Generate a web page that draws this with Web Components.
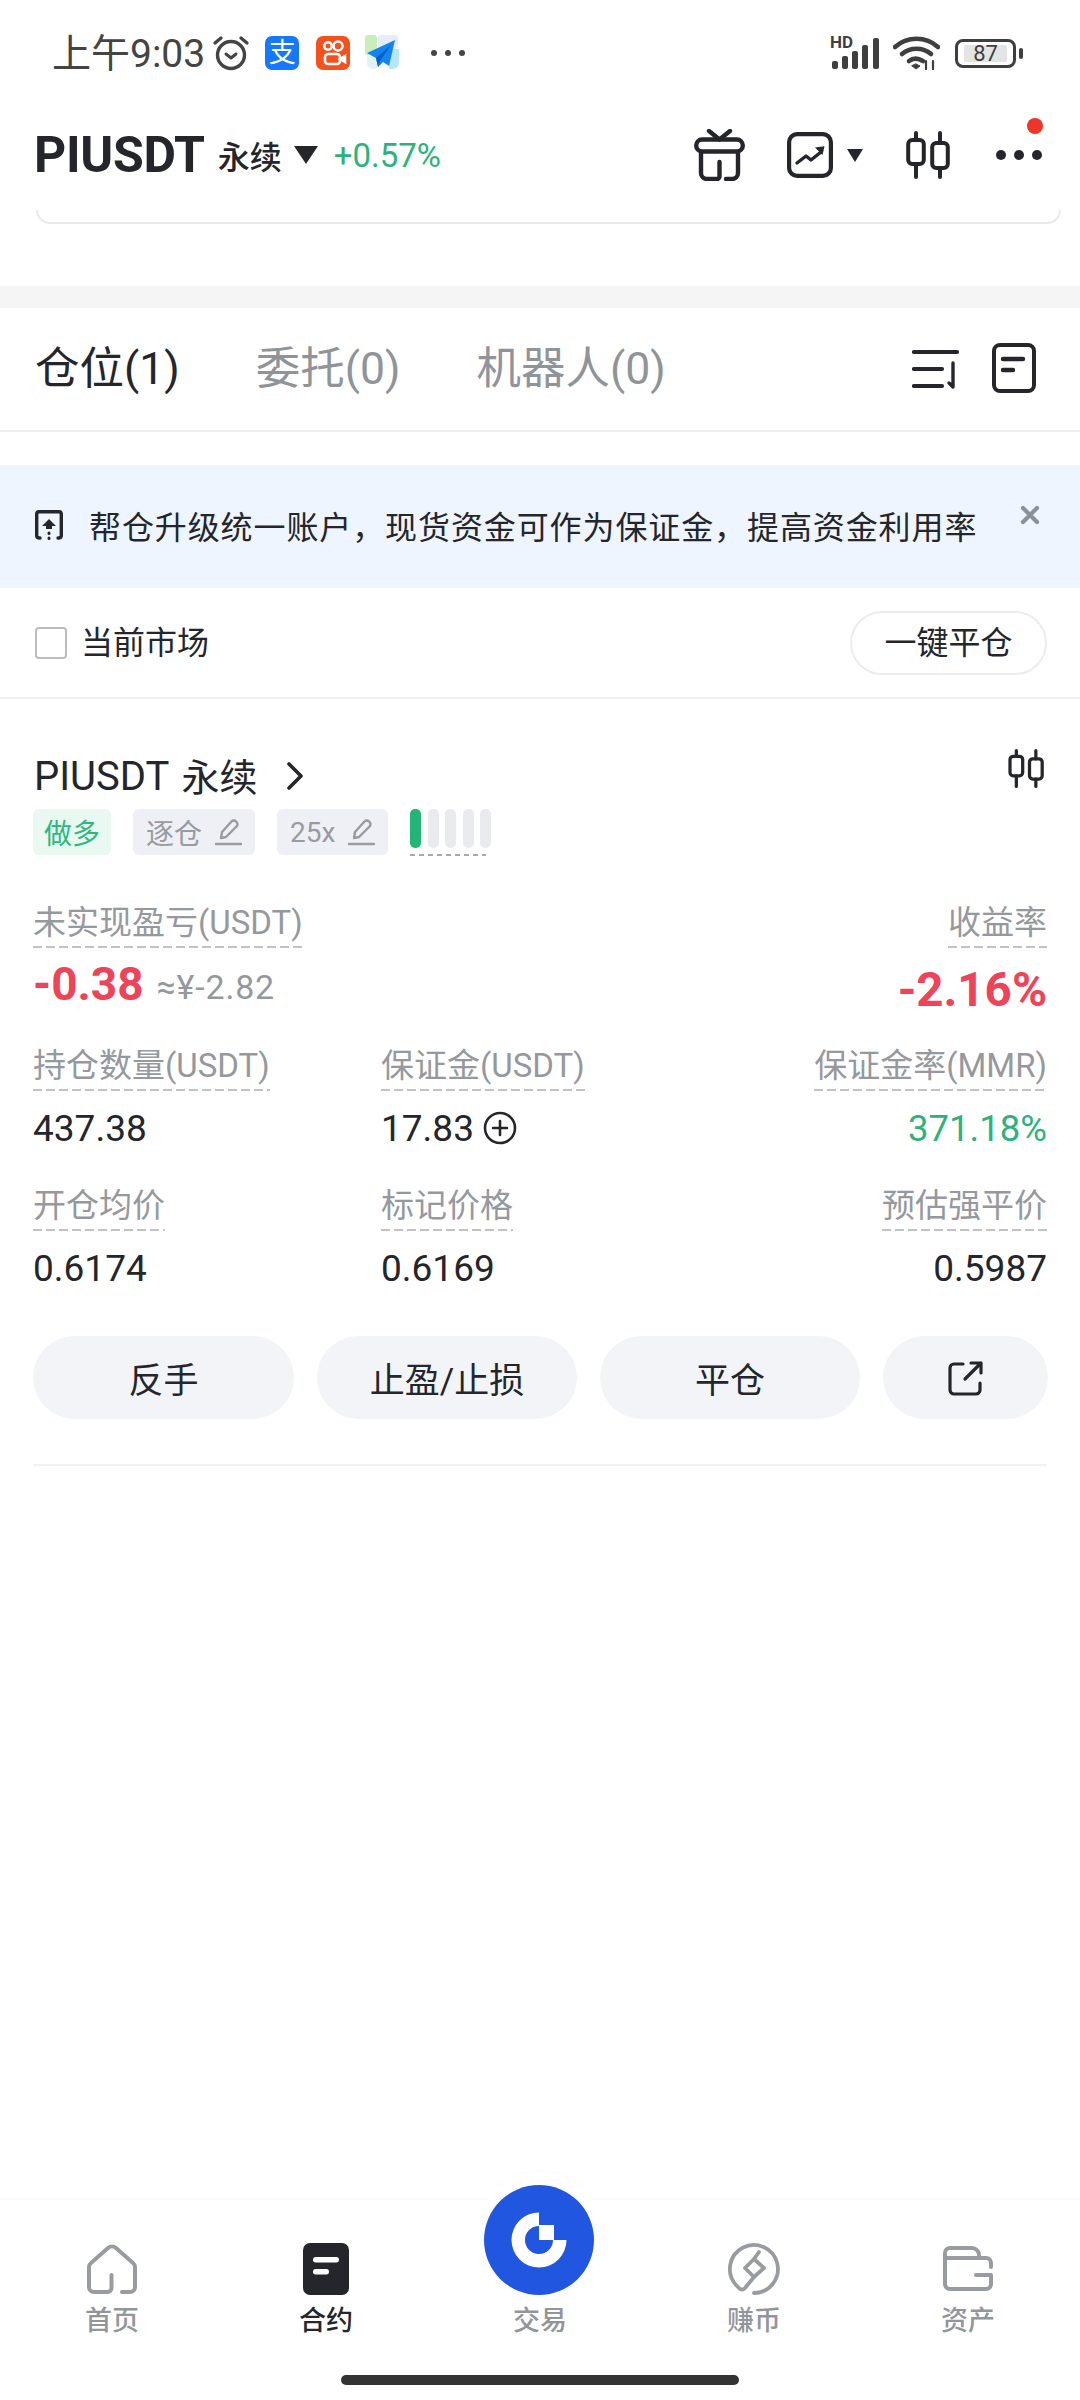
<!DOCTYPE html>
<html lang="zh-CN">
<head>
<meta charset="utf-8">
<title>PIUSDT</title>
<style>
  html, body { margin: 0; padding: 0; background: #fff; }
  body { font-family: Roboto, "Noto Sans CJK SC", sans-serif; color: #24262c; }
  app-page { width: 1080px; height: 2400px; }
</style>
</head>
<body>
<app-page>
  <status-bar></status-bar>
  <market-header></market-header>
  <tab-bar></tab-bar>
  <notice-banner>帮仓升级统一账户，现货资金可作为保证金，提高资金利用率</notice-banner>
  <filter-row></filter-row>
  <position-card></position-card>
  <bottom-nav slot="nav"></bottom-nav>
</app-page>

<script>
const INK = "#24262c";
const GREY = "#989ba0";

const ICONS = {
  gift: `<svg width="51" height="52" viewBox="0 0 51 52" fill="none" stroke="${INK}" stroke-width="4.4" stroke-linecap="round" stroke-linejoin="round"><rect x="2.2" y="10.5" width="46.6" height="12" rx="6"/><path d="M15 2l10.5 8.5L36 2"/><path d="M7 23v21a6 6 0 0 0 6 6h10a2.5 2.5 0 0 0 2.5-2.5V33"/><path d="M44 23v21a6 6 0 0 1-6 6h-6"/></svg>`,
  chart: `<svg width="46" height="46" viewBox="0 0 46 46" fill="none" stroke="${INK}" stroke-width="4.2" stroke-linecap="round" stroke-linejoin="round"><rect x="2.1" y="2.1" width="41.8" height="41.8" rx="8"/><path d="M10 31l9-7 5 4 10-8" stroke-width="3.4"/><path d="M28 15.5l9.5-1.2-2 8.6z" fill="${INK}" stroke="none"/></svg>`,
  candles: `<svg width="100%" height="100%" viewBox="0 0 45 48" fill="none" stroke="${INK}" stroke-width="4" stroke-linecap="round" stroke-linejoin="round"><path d="M10 2v7M10 33v13M34 2v10M34 37v9"/><rect x="2.2" y="9" width="15.6" height="24" rx="4"/><rect x="26.2" y="12" width="15.6" height="25" rx="4"/></svg>`,
  sort: `<svg width="48" height="44" viewBox="0 0 48 44" fill="none" stroke="${INK}" stroke-width="4.2" stroke-linecap="round" stroke-linejoin="round"><path d="M2 6h43M2 23h28M2 40h28"/><path d="M41 17v24l-4-4" stroke-width="3.4"/></svg>`,
  doc: `<svg width="44" height="50" viewBox="0 0 44 50" fill="none" stroke="${INK}" stroke-width="4" stroke-linecap="round"><rect x="2" y="2" width="40" height="46" rx="6"/><path d="M11 16h20M11 27h10" stroke-width="4.4"/></svg>`,
  upgrade: `<svg width="28" height="30" viewBox="0 0 28 30" fill="none" stroke="${INK}" stroke-width="3.4" stroke-linecap="round" stroke-linejoin="round"><path d="M5 28H4a2.4 2.4 0 0 1-2.3-2.4V4A2.4 2.4 0 0 1 4 1.7h20A2.4 2.4 0 0 1 26.3 4v21.6A2.4 2.4 0 0 1 24 28h-1"/><path d="M14 9l7 7h-4v3h-6v-3H7z" fill="${INK}" stroke="none"/><path d="M14 23v.5M14 28v.5" stroke-width="3"/></svg>`,
  close: `<svg width="20" height="20" viewBox="0 0 20 20" fill="none" stroke="#8b9199" stroke-width="4.2" stroke-linecap="round"><path d="M3 3l14 14M17 3L3 17"/></svg>`,
  chevron: `<svg width="18" height="28" viewBox="0 0 18 28" fill="none" stroke="${INK}" stroke-width="3.6" stroke-linecap="round" stroke-linejoin="round"><path d="M3 2l12 12L3 26"/></svg>`,
  pen: `<svg width="28" height="28" viewBox="0 0 28 28" fill="none" stroke="#989ba0" stroke-width="2.4" stroke-linecap="round" stroke-linejoin="round"><path d="M2 26h25"/><path d="M7 20l1-6L17.500 3.500a3 3 0 0 1 4.500 0l.5.5a3 3 0 0 1 0 4.500L12 19z"/></svg>`,
  plus: `<svg width="34" height="34" viewBox="0 0 34 34" fill="none" stroke="${INK}" stroke-width="2.600" stroke-linecap="round"><circle cx="17" cy="17" r="15"/><path d="M17 10v14M10 17h14"/></svg>`,
  share: `<svg width="36" height="36" viewBox="0 0 36 36" fill="none" stroke="${INK}" stroke-width="3.200" stroke-linecap="round" stroke-linejoin="round"><path d="M15 4H6a4 4 0 0 0-4 4v22a4 4 0 0 0 4 4h22a4 4 0 0 0 4-4v-7"/><path d="M17 19L33 3M23 3h10v10" /></svg>`,
  home: `<svg width="52" height="52" viewBox="-2 -2 52 52" fill="none" stroke="${GREY}" stroke-width="4" stroke-linecap="round" stroke-linejoin="round"><path d="M23.500 30v13a4 4 0 0 1-4 4H6a5 5 0 0 1-5-5V22a5 5 0 0 1 2-4L20 3a6 6 0 0 1 8 0l17 15a5 5 0 0 1 2 4v20a5 5 0 0 1-5 5h-8"/></svg>`,
  contract: `<svg width="46" height="52" viewBox="0 0 46 52"><rect width="46" height="52" rx="7" fill="${INK}"/><rect x="10" y="14" width="26" height="5.500" rx="2.700" fill="#fff"/><rect x="10" y="26" width="16" height="5.500" rx="2.700" fill="#fff"/></svg>`,
  earn: `<svg width="54" height="54" viewBox="0 0 54 54" fill="none" stroke="${GREY}" stroke-width="3.800" stroke-linecap="round" stroke-linejoin="round"><path d="M27 51A24 24 0 1 0 9 43l3 3q3 3 6 0l9-11-9-9 9-9 5-7"/><path d="M27 17l10 9-10 9"/></svg>`,
  wallet: `<svg width="52" height="48" viewBox="-1 -1 52 48" fill="none" stroke="${GREY}" stroke-width="4" stroke-linecap="round" stroke-linejoin="round"><path d="M48 21v-4a5 5 0 0 0-5-5H2"/><path d="M2 12V7a5 5 0 0 1 5-5h22a7 7 0 0 1 7 7v3"/><path d="M2 12v26a5 5 0 0 0 5 5h36a5 5 0 0 0 5-5V29H33"/></svg>`,
  logo: `<svg width="110" height="110" viewBox="-55 -55 110 110"><circle r="55" fill="#2056e0"/><path d="M0-27.500A27.500 27.500 0 1 0 27.500 0H14A14 14 0 1 1 0-14z" fill="#fff"/><rect y="-15" width="15" height="15" fill="#fff"/></svg>`,
  alarm: `<svg width="38" height="36" viewBox="0 0 38 36" fill="none" stroke="#444" stroke-width="3.400" stroke-linecap="round" stroke-linejoin="round"><circle cx="19" cy="20" r="13.500"/><path d="M14 19l5 4 5-4" stroke-width="3"/><path d="M3 8l6-5M35 8l-6-5"/></svg>`,
  kuaishou: `<svg width="34" height="34" viewBox="0 0 34 34" fill="none" stroke="#fff" stroke-width="2.600"><rect width="34" height="34" rx="7" fill="#f4511e" stroke="none"/><circle cx="12" cy="10" r="3.800"/><circle cx="22" cy="10" r="4.500"/><rect x="9" y="18" width="15" height="10" rx="3"/><path d="M24 23l5-3v6z" fill="#fff"/></svg>`,
  plane: `<svg width="36" height="36" viewBox="0 0 36 36"><rect x="0" y="0" width="12" height="20" rx="3" fill="#c9eeb9"/><rect x="13" y="0" width="20" height="14" rx="3" fill="#e6edf8"/><path d="M24 14h10v14a6 6 0 0 1-6 6H24z" fill="#b6e6f7"/><path d="M2 20h10v14H8a6 6 0 0 1-6-6z" fill="#dff4f3"/><path d="M30 5L2 18l9 5 2 9 5-5 6 4z" fill="#1286f0"/><path d="M11 23l15-13-11 16-2 6z" fill="#0b5fc4"/></svg>`,
  signal: `<svg width="50" height="32" viewBox="0 0 50 32" fill="#3f3f3f"><rect x="2" y="24" width="6" height="8" rx="2"/><rect x="12" y="19" width="6" height="13" rx="2"/><rect x="22" y="14" width="6" height="18" rx="2"/><rect x="32" y="8" width="6" height="24" rx="2"/><rect x="43" y="1" width="6" height="31" rx="2"/></svg>`,
  wifi: `<svg width="47" height="34" viewBox="0 0 47 34" fill="none" stroke="#3f3f3f" stroke-width="4.600" stroke-linecap="round"><path d="M2 11c12-11 31-11 43 0"/><path d="M9 18c8-7 21-7 29 0"/><path d="M16 25c4-3 9-3 14 0" /><path d="M19 30l4 3 4-3-4-2z" fill="#3f3f3f" stroke-width="1"/><path d="M33 25v8M40 25v8" stroke-width="2.200"/></svg>`
};

class UiIcon extends HTMLElement {
  constructor() {
    super();
    this.attachShadow({ mode: "open" });
    this.shadowRoot.innerHTML = `
      <style>
        :host { display: inline-flex; flex: none; align-items: center; justify-content: center; }
        svg { display: block; }
      </style>
      ${ICONS[this.getAttribute("name")] || ""}
    `;
  }
}
customElements.define("ui-icon", UiIcon);

class AppPage extends HTMLElement {
  constructor() {
    super();
    this.attachShadow({ mode: "open" });
    this.shadowRoot.innerHTML = `
      <style>
        :host { display: flex; flex-direction: column; overflow: hidden; background: #fff; }
        .fill { flex: 1; }
      </style>
      <slot></slot>
      <div class="fill"></div>
      <slot name="nav"></slot>
    `;
  }
}
customElements.define("app-page", AppPage);

class StatusBar extends HTMLElement {
  constructor() {
    super();
    this.attachShadow({ mode: "open" });
    this.shadowRoot.innerHTML = `
      <style>
        :host { display: flex; align-items: center; height: 106px; padding: 0 57px 0 52px; box-sizing: border-box; color: #444; }
        .time { font-size: 39px; line-height: 44px; padding-top: 2px; }
        .alarm { margin-left: 7px; }
        .pay {
          width: 34px; height: 34px; margin-left: 15px; border-radius: 7px;
          background: #1677ff; color: #fff; font-size: 27px; line-height: 34px; text-align: center;
        }
        .ks { margin-left: 17px; }
        .fly { margin-left: 15px; }
        .more { margin-left: 30px; display: flex; gap: 8px; }
        .more i { width: 6px; height: 6px; border-radius: 50%; background: #444; }
        .right { margin-left: auto; display: flex; align-items: center; }
        .sig { position: relative; width: 50px; height: 32px; }
        .hd { position: absolute; left: 0; top: -3px; font: 700 17px/17px Roboto, sans-serif; color: #3f3f3f; }
        .wifi { margin-left: 13px; }
        .batt {
          margin-left: 15px; width: 61px; height: 29px; box-sizing: border-box;
          border: 3px solid #3f3f3f; border-radius: 8px; padding: 3px;
        }
        .level { height: 100%; width: 87%; margin: 0 auto; background: #e4e4e4; border-radius: 2px; text-align: center; font-size: 22px; line-height: 17px; color: #3f3f3f; }
        .nub { width: 4px; height: 11px; margin-left: 3px; background: #3f3f3f; border-radius: 2px; }
      </style>
      <span class="time">上午9:03</span>
      <ui-icon class="alarm" name="alarm"></ui-icon>
      <span class="pay">支</span>
      <ui-icon class="ks" name="kuaishou"></ui-icon>
      <ui-icon class="fly" name="plane"></ui-icon>
      <span class="more"><i></i><i></i><i></i></span>
      <span class="right">
        <span class="sig"><span class="hd">HD</span><ui-icon name="signal"></ui-icon></span>
        <ui-icon class="wifi" name="wifi"></ui-icon>
        <span class="batt"><div class="level">87</div></span>
        <span class="nub"></span>
      </span>
    `;
  }
}
customElements.define("status-bar", StatusBar);

class MarketHeader extends HTMLElement {
  constructor() {
    super();
    this.attachShadow({ mode: "open" });
    this.shadowRoot.innerHTML = `
      <style>
        :host { display: block; }
        .row { display: flex; align-items: center; height: 98px; padding: 0 38px 0 34px; }
        .sym { font-size: 50px; font-weight: 700; letter-spacing: -0.3px; }
        .kind { font-size: 32px; margin-left: 13px; font-weight: 500; }
        .tri { width: 0; height: 0; margin-left: 12px; border-style: solid; border-width: 18px 12px 0; border-color: ${INK} transparent transparent; }
        .tri.small { margin: 0 0 0 14px; border-width: 13px 8px 0; }
        .chg { margin-left: 16px; font-size: 33px; color: #2db27b; }
        .tools { margin-left: auto; display: flex; align-items: center; }
        .gift { margin-right: 42px; }
        .cand { width: 45px; height: 48px; margin-left: 43px; }
        .menu { position: relative; margin-left: 45px; display: flex; gap: 8px; }
        .menu i { width: 10px; height: 10px; border-radius: 50%; background: ${INK}; }
        .menu b { position: absolute; right: -1px; top: -32px; width: 16px; height: 16px; border-radius: 50%; background: #ee3528; }
        .edge { height: 14px; margin: 6px 19px 0 36px; border: 2px solid #e9e9e9; border-top: 0; border-radius: 0 0 18px 18px; box-sizing: border-box; }
      </style>
      <div class="row">
        <span class="sym">PIUSDT</span>
        <span class="kind">永续</span>
        <span class="tri"></span>
        <span class="chg">+0.57%</span>
        <span class="tools">
          <ui-icon class="gift" name="gift"></ui-icon>
          <ui-icon name="chart"></ui-icon>
          <span class="tri small"></span>
          <ui-icon class="cand" name="candles"></ui-icon>
          <span class="menu"><i></i><i></i><i></i><b></b></span>
        </span>
      </div>
      <div class="edge"></div>
    `;
  }
}
customElements.define("market-header", MarketHeader);

class TabBar extends HTMLElement {
  constructor() {
    super();
    this.attachShadow({ mode: "open" });
    this.shadowRoot.innerHTML = `
      <style>
        :host { display: block; margin-top: 62px; border-top: 22px solid #f5f5f6; }
        .row {
          display: flex; align-items: center; height: 124px; padding: 0 44px 10px 35px; box-sizing: border-box;
          border-bottom: 2px solid #f0f0f0; font-size: 44.500px; color: #8f9499; gap: 76px;
        }
        .on { color: ${INK}; }
        .tools { margin-left: auto; margin-top: 8px; display: flex; align-items: center; gap: 32px; }
      </style>
      <div class="row">
        <span class="on">仓位(1)</span>
        <span>委托(0)</span>
        <span>机器人(0)</span>
        <span class="tools"><ui-icon name="sort"></ui-icon><ui-icon name="doc"></ui-icon></span>
      </div>
    `;
  }
}
customElements.define("tab-bar", TabBar);

class NoticeBanner extends HTMLElement {
  constructor() {
    super();
    this.attachShadow({ mode: "open" });
    this.shadowRoot.innerHTML = `
      <style>
        :host {
          display: flex; align-items: center; position: relative; height: 123px; margin-top: 33px;
          padding: 0 0 3px 35px; box-sizing: border-box; background: #eef5ff;
          font-size: 32px; letter-spacing: 0.9px; color: ${INK};
        }
        .text { margin-left: 26px; }
        .x { position: absolute; right: 40px; top: 40px; }
      </style>
      <ui-icon name="upgrade"></ui-icon>
      <span class="text"><slot></slot></span>
      <ui-icon class="x" name="close"></ui-icon>
    `;
  }
}
customElements.define("notice-banner", NoticeBanner);

class FilterRow extends HTMLElement {
  constructor() {
    super();
    this.attachShadow({ mode: "open" });
    this.shadowRoot.innerHTML = `
      <style>
        :host {
          display: flex; align-items: center; height: 111px; padding: 0 33px 0 35px; box-sizing: border-box;
          border-bottom: 2px solid #f0f0f0; font-size: 32px; color: ${INK};
        }
        .box { width: 32px; height: 32px; box-sizing: border-box; border: 2px solid #b9bcc0; border-radius: 4px; }
        .label { margin-left: 14px; padding-bottom: 5px; }
        .btn {
          margin-left: auto; width: 197px; height: 64px; box-sizing: border-box; border: 2px solid #ececec;
          border-radius: 32px; display: flex; align-items: center; justify-content: center; padding-bottom: 5px;
        }
      </style>
      <span class="box"></span>
      <span class="label">当前市场</span>
      <span class="btn">一键平仓</span>
    `;
  }
}
customElements.define("filter-row", FilterRow);

class TagChip extends HTMLElement {
  constructor() {
    super();
    this.attachShadow({ mode: "open" });
    this.shadowRoot.innerHTML = `
      <style>
        :host {
          display: inline-flex; align-items: center; gap: 12px; height: 46px; padding: 0 13px; box-sizing: border-box;
          border-radius: 6px; background: #eef0f5; color: #989ba0; font-size: 28px;
        }
        :host([tone="long"]) { padding: 0 11px; background: #e9f8f1; color: #2db87e; }
      </style>
      <slot></slot>
    `;
  }
}
customElements.define("tag-chip", TagChip);

class StatCell extends HTMLElement {
  constructor() {
    super();
    this.attachShadow({ mode: "open" });
    this.shadowRoot.innerHTML = `
      <style>
        :host { display: flex; flex-direction: column; align-items: flex-start; }
        :host([align="end"]) { align-items: flex-end; }
        .label {
          font-size: 33px; line-height: 40px; color: #95999e;
          background: repeating-linear-gradient(90deg, #c2c2c2 0 9px, transparent 9px 13px) left bottom / 100% 2px no-repeat;
          padding-bottom: 5px;
        }
        .value { display: flex; align-items: center; height: 50px; margin-top: 12px; font-size: 37px; color: ${INK}; }
        :host([tone="up"]) .value { color: #2db27b; font-size: 36.500px; }
      </style>
      <span class="label">${this.getAttribute("label")}</span>
      <span class="value" part="value"><slot></slot></span>
    `;
  }
}
customElements.define("stat-cell", StatCell);

class PositionCard extends HTMLElement {
  constructor() {
    super();
    this.attachShadow({ mode: "open" });
    this.shadowRoot.innerHTML = `
      <style>
        :host { display: block; padding: 0 33px; }
        .title { display: flex; align-items: center; height: 40px; margin-top: 57px; padding-left: 1px; font-size: 40px; }
        .title span { margin-left: 12px; margin-bottom: 4px; font-size: 38px; }
        .go { margin-left: 29px; }
        .cand { width: 37px; height: 39px; margin-left: auto; margin-top: -16px; margin-right: 2px; }
        .tags { display: flex; align-items: flex-start; gap: 22px; margin-top: 13px; }
        .gauge { display: flex; gap: 6.500px; position: relative; height: 46px; margin-left: 0; }
        .gauge i { width: 11px; height: 39px; border-radius: 5px; background: #e9ebee; }
        .gauge i:first-child { background: #22b573; }
        .gauge u {
          position: absolute; left: 0; bottom: -1px; width: 76px; height: 2px;
          background: repeating-linear-gradient(90deg, #a9a9a9 0 5px, transparent 5px 9px);
        }
        .stats { display: grid; grid-template-columns: 348px 1fr 1fr; row-gap: 33px; margin-top: 48px; }
        .wide { grid-column: span 2; margin-bottom: 3px; }
        .pnl { font-size: 46px; font-weight: 700; color: #ee4358; position: relative; top: -1px; }
        .cny { font-size: 34px; letter-spacing: 0.8px; color: #95999e; margin-left: 13px; position: relative; top: 2px; }
        .rate { font-size: 47.500px; font-weight: 700; color: #ee4358; position: relative; top: 5px; }
        .add { margin-left: 9px; }
        .actions { display: grid; grid-template-columns: 261px 260px 260px 165px; gap: 23px; margin-top: 43px; }
        .act {
          height: 83px; border-radius: 42px; background: #f2f4f7; font-size: 35px;
          display: flex; align-items: center; justify-content: center;
        }
        .rule { height: 2px; margin-top: 45px; background: #f2f2f3; }
      </style>
      <div class="title">PIUSDT<span>永续</span><ui-icon class="go" name="chevron"></ui-icon><ui-icon class="cand" name="candles"></ui-icon></div>
      <div class="tags">
        <tag-chip tone="long">做多</tag-chip>
        <tag-chip>逐仓<ui-icon name="pen"></ui-icon></tag-chip>
        <tag-chip>25x<ui-icon name="pen"></ui-icon></tag-chip>
        <div class="gauge"><i></i><i></i><i></i><i></i><i></i><u></u></div>
      </div>
      <div class="stats">
        <stat-cell class="wide" label="未实现盈亏(USDT)"><span class="pnl">-0.38</span><span class="cny">≈¥-2.82</span></stat-cell>
        <stat-cell align="end" label="收益率"><span class="rate">-2.16%</span></stat-cell>
        <stat-cell label="持仓数量(USDT)">437.38</stat-cell>
        <stat-cell label="保证金(USDT)">17.83<ui-icon class="add" name="plus"></ui-icon></stat-cell>
        <stat-cell align="end" tone="up" label="保证金率(MMR)">371.18%</stat-cell>
        <stat-cell label="开仓均价">0.6174</stat-cell>
        <stat-cell label="标记价格">0.6169</stat-cell>
        <stat-cell align="end" label="预估强平价">0.5987</stat-cell>
      </div>
      <div class="actions">
        <div class="act">反手</div>
        <div class="act">止盈/止损</div>
        <div class="act">平仓</div>
        <div class="act"><ui-icon name="share"></ui-icon></div>
      </div>
      <div class="rule"></div>
    `;
  }
}
customElements.define("position-card", PositionCard);

class NavItem extends HTMLElement {
  constructor() {
    super();
    this.attachShadow({ mode: "open" });
    this.shadowRoot.innerHTML = `
      <style>
        :host { display: flex; flex-direction: column; align-items: center; color: #92959a; font-size: 27px; font-weight: 500; }
        :host([active]) { color: ${INK}; }
        .icon { height: 54px; display: flex; align-items: center; justify-content: center; position: relative; }
        :host([raised]) .icon { width: 110px; }
        ::slotted([slot="float"]) { position: absolute; left: -1px; top: -57px; }
        .label { margin-top: 8px; line-height: 34px; }
      </style>
      <div class="icon"><slot name="icon"></slot><slot name="float"></slot></div>
      <span class="label"><slot></slot></span>
    `;
  }
}
customElements.define("nav-item", NavItem);

class BottomNav extends HTMLElement {
  constructor() {
    super();
    this.attachShadow({ mode: "open" });
    this.shadowRoot.innerHTML = `
      <style>
        :host {
          display: block; position: relative; height: 202px; box-sizing: border-box; padding-top: 42px;
          border-top: 2px solid #fbfbfb;
        }
        .halo { position: absolute; left: 474px; top: -28px; width: 132px; height: 66px; border-radius: 66px 66px 0 0; background: #fff; box-shadow: 0 -2px 3px rgba(0,0,0,.012); }
        .items { display: grid; grid-template-columns: repeat(5, 214px); padding-left: 5px; position: relative; }
        .handle { width: 398px; height: 10px; margin: 37px auto 0; border-radius: 5px; background: #333; }
      </style>
      <div class="halo"></div>
      <div class="items">
        <nav-item><ui-icon slot="icon" name="home"></ui-icon>首页</nav-item>
        <nav-item active><ui-icon slot="icon" name="contract"></ui-icon>合约</nav-item>
        <nav-item raised><ui-icon slot="float" name="logo"></ui-icon>交易</nav-item>
        <nav-item><ui-icon slot="icon" name="earn"></ui-icon>赚币</nav-item>
        <nav-item><ui-icon slot="icon" name="wallet"></ui-icon>资产</nav-item>
      </div>
      <div class="handle"></div>
    `;
  }
}
customElements.define("bottom-nav", BottomNav);
</script>
</body>
</html>
